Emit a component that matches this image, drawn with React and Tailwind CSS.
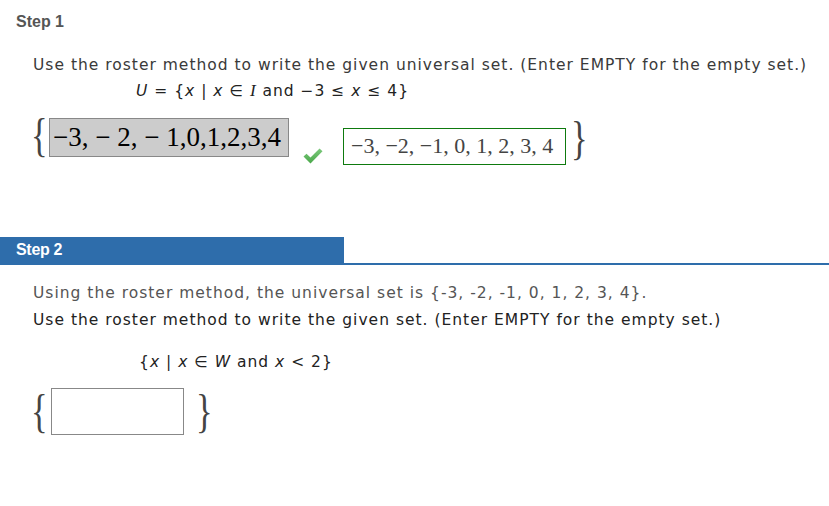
import React from "react";

const serif = "font-['Liberation_Serif',serif]";
const brace = serif + " text-[46px] leading-[40px] text-[#444] scale-x-[0.75]";

function Check() {
  return (
    <svg width="22" height="18" viewBox="0 0 22 18" className="block">
      <defs>
        <linearGradient id="cg" x1="0" y1="0" x2="0" y2="1">
          <stop offset="0" stopColor="#7cc97c" />
          <stop offset="1" stopColor="#4aa84a" />
        </linearGradient>
      </defs>
      <path d="M1.5 9.5 L4.5 6.8 L8.5 10.5 L17.5 1.5 L20.5 4.3 L8.5 16.5 Z" fill="url(#cg)" />
    </svg>
  );
}

export default function App() {
  return (
    <div className="w-[829px] h-[506px] bg-white overflow-hidden font-['DejaVu_Sans',sans-serif] text-[15.5px] tracking-[1px] text-[#333]">
      <div className="h-[55px] pt-[13px] pl-[16px]">
        <div className="font-['Liberation_Sans',Arial,sans-serif] font-bold text-[16px] leading-[18px] tracking-normal text-[#555]">Step 1</div>
      </div>
      <div className="pl-[33px] leading-[20px] text-[#3a3a3a] whitespace-nowrap">
        Use the roster method to write the given universal set. (Enter EMPTY for the empty set.)
      </div>
      <div className="mt-[6px] pl-[136px] leading-[20px] text-[#222] whitespace-nowrap">
        <i>U</i> = {"{"}<i>x</i> | <i>x</i> ∈ <i className={serif + " text-[17px]"}>I</i> and −3 ≤ <i>x</i> ≤ 4{"}"}
      </div>
      <div className="mt-[16px] pl-[31px] flex items-start h-[48px] tracking-normal">
        <div className={brace + " w-[18px] -mt-[1px] origin-left"}>{"{"}</div>
        <div className={serif + " mt-[1px] w-[240px] h-[39px] bg-[#cccccc] border border-[#888] text-[27px] leading-[36px] text-black pl-[3px] whitespace-nowrap"}>
          −3, − 2, − 1,0,1,2,3,4
        </div>
        <div className="ml-[13px] mt-[30px]"><Check /></div>
        <div className={serif + " ml-[19px] mt-[11px] w-[223px] h-[37px] border border-[#0e7a0e] text-[22px] leading-[34px] text-[#444] pl-[7px] whitespace-nowrap"}>
          −3, −2, −1, 0, 1, 2, 3, 4
        </div>
        <div className={brace + " ml-[5px] mt-[2px] origin-left"}>{"}"}</div>
      </div>
      <div className="mt-[72px] tracking-normal">
        <div className="w-[344px] h-[26px] bg-[#2e6dab] pl-[16px] font-['Liberation_Sans',Arial,sans-serif] font-bold text-[16px] leading-[26px] text-white tracking-[-0.3px]">
          Step 2
        </div>
        <div className="h-[2px] bg-[#2e6dab]" />
      </div>
      <div className="mt-[15px] pl-[33px] leading-[27px] whitespace-nowrap">
        <div className="text-[#555]">Using the roster method, the universal set is {"{"}-3, -2, -1, 0, 1, 2, 3, 4{"}"}.</div>
        <div className="text-[#222]">Use the roster method to write the given set. (Enter EMPTY for the empty set.)</div>
      </div>
      <div className="mt-[18px] pl-[139px] leading-[20px] text-[#222] whitespace-nowrap">
        {"{"}<i>x</i> | <i>x</i> ∈ <i>W</i> and <i>x</i> &lt; 2{"}"}
      </div>
      <div className="mt-[16px] pl-[31px] flex items-start tracking-normal">
        <div className={brace + " w-[20px] mt-[4px] origin-left"}>{"{"}</div>
        <div className="w-[133px] h-[47px] border border-[#888] bg-white" />
        <div className={brace + " ml-[12px] mt-[4px] origin-left"}>{"}"}</div>
      </div>
    </div>
  );
}
